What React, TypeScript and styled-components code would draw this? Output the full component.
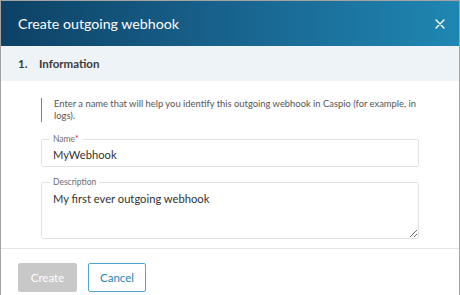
import styled, { createGlobalStyle } from "styled-components";
import { FC } from "react";

const GlobalStyle = createGlobalStyle`
  html, body {
    margin: 0;
    padding: 0;
    background: #ffffff;
  }
  body {
    font-family: Lato, "Open Sans", sans-serif;
  }
  * {
    box-sizing: border-box;
  }
`;

const App: FC = () => {
  return (
    <>
      <GlobalStyle />
      <Dialog>
        <Header>
          <Title>Create outgoing webhook</Title>
          <CloseButton aria-label="Close">
            <svg width="10" height="10" viewBox="0 0 10 10">
              <path
                d="M1 1 L9 9 M9 1 L1 9"
                stroke="#ffffff"
                strokeWidth="1.4"
                strokeLinecap="round"
              />
            </svg>
          </CloseButton>
        </Header>

        <SectionBar>
          <StepNumber>1.</StepNumber>
          <StepName>Information</StepName>
        </SectionBar>

        <Body>
          <Hint>
            Enter a name that will help you identify this outgoing webhook in
            Caspio (for example, in logs).
          </Hint>

          <Field>
            <Legend>
              Name<Required>*</Required>
            </Legend>
            <TextInput defaultValue="MyWebhook" />
          </Field>

          <Field>
            <Legend>Description</Legend>
            <TextArea defaultValue="My first ever outgoing webhook" />
          </Field>
        </Body>

        <Footer>
          <Button disabled>Create</Button>
          <Button outline>Cancel</Button>
        </Footer>
      </Dialog>
    </>
  );
};

/** Styled Components */
const Dialog = styled.div`
  width: 460px;
  height: 295px;
  border: 1px solid #a3a3a3;
  border-bottom: none;
  background: #ffffff;
  display: flex;
  flex-direction: column;
  overflow: hidden;
`;

const Header = styled.div`
  height: 45px;
  flex-shrink: 0;
  display: flex;
  align-items: center;
  justify-content: space-between;
  padding: 0 14px 0 17px;
  background: linear-gradient(90deg, #0d4165 0%, #17608a 45%, #1f86b2 100%);
`;

const Title = styled.h1`
  margin: 0;
  font-size: 14.2px;
  font-weight: 400;
  color: #ffffff;
`;

const CloseButton = styled.button`
  border: none;
  background: none;
  padding: 0;
  width: 10px;
  height: 10px;
  display: flex;
  align-items: center;
  justify-content: center;
  cursor: pointer;
`;

const SectionBar = styled.div`
  height: 35px;
  flex-shrink: 0;
  display: flex;
  align-items: center;
  padding: 0 17px;
  background: #eef3f7;
  font-size: 11.5px;
  font-weight: 700;
  color: #3a3a3a;
`;

const StepNumber = styled.span`
  width: 21px;
`;

const StepName = styled.span``;

const Body = styled.div`
  padding: 17px 40px 0 40px;
  display: flex;
  flex-direction: column;
  gap: 10px;
  border-bottom: 1px solid #e4e4e4;
  height: 168px;
  flex-shrink: 0;
`;

const Hint = styled.p`
  margin: 0 0 2px 0;
  padding: 0 0 0 12px;
  border-left: 1px solid #5b8aa8;
  font-size: 9.4px;
  line-height: 12px;
  color: #555555;
`;

const Field = styled.fieldset`
  margin: 0;
  padding: 0 12px 4px 11px;
  border: 1px solid #e2e2e2;
  border-radius: 2px;
  display: flex;
  flex-direction: column;
`;

const Legend = styled.legend`
  padding: 0 3px;
  margin-left: -3px;
  font-size: 8.5px;
  line-height: 10px;
  color: #6e6e6e;
`;

const Required = styled.span`
  color: #c8102e;
`;

const TextInput = styled.input`
  border: none;
  outline: none;
  padding: 4px 0 1px 0;
  font-family: Lato, "Open Sans", sans-serif;
  font-size: 11.2px;
  color: #333333;
  background: transparent;
`;

const TextArea = styled.textarea`
  border: none;
  outline: none;
  padding: 5px 0 0 0;
  margin-right: -12px;
  margin-bottom: -4px;
  height: 51px;
  resize: vertical;
  font-family: Lato, "Open Sans", sans-serif;
  font-size: 11.2px;
  color: #333333;
  background: transparent;
`;

const Footer = styled.div`
  display: flex;
  align-items: center;
  gap: 11px;
  padding: 14px 17px 0 17px;
`;

const Button = styled.button<{ outline?: boolean }>`
  height: 29px;
  width: ${({ outline }) => (outline ? "58px" : "59px")};
  border-radius: 2px;
  font-family: Lato, "Open Sans", sans-serif;
  font-size: 11.5px;
  cursor: pointer;
  border: 1px solid ${({ outline }) => (outline ? "#4fa6cc" : "#c8c8c8")};
  background: ${({ outline }) => (outline ? "#ffffff" : "#c8c8c8")};
  color: ${({ outline }) => (outline ? "#2585b3" : "#ffffff")};

  &:disabled {
    cursor: default;
  }
`;

export default App;
